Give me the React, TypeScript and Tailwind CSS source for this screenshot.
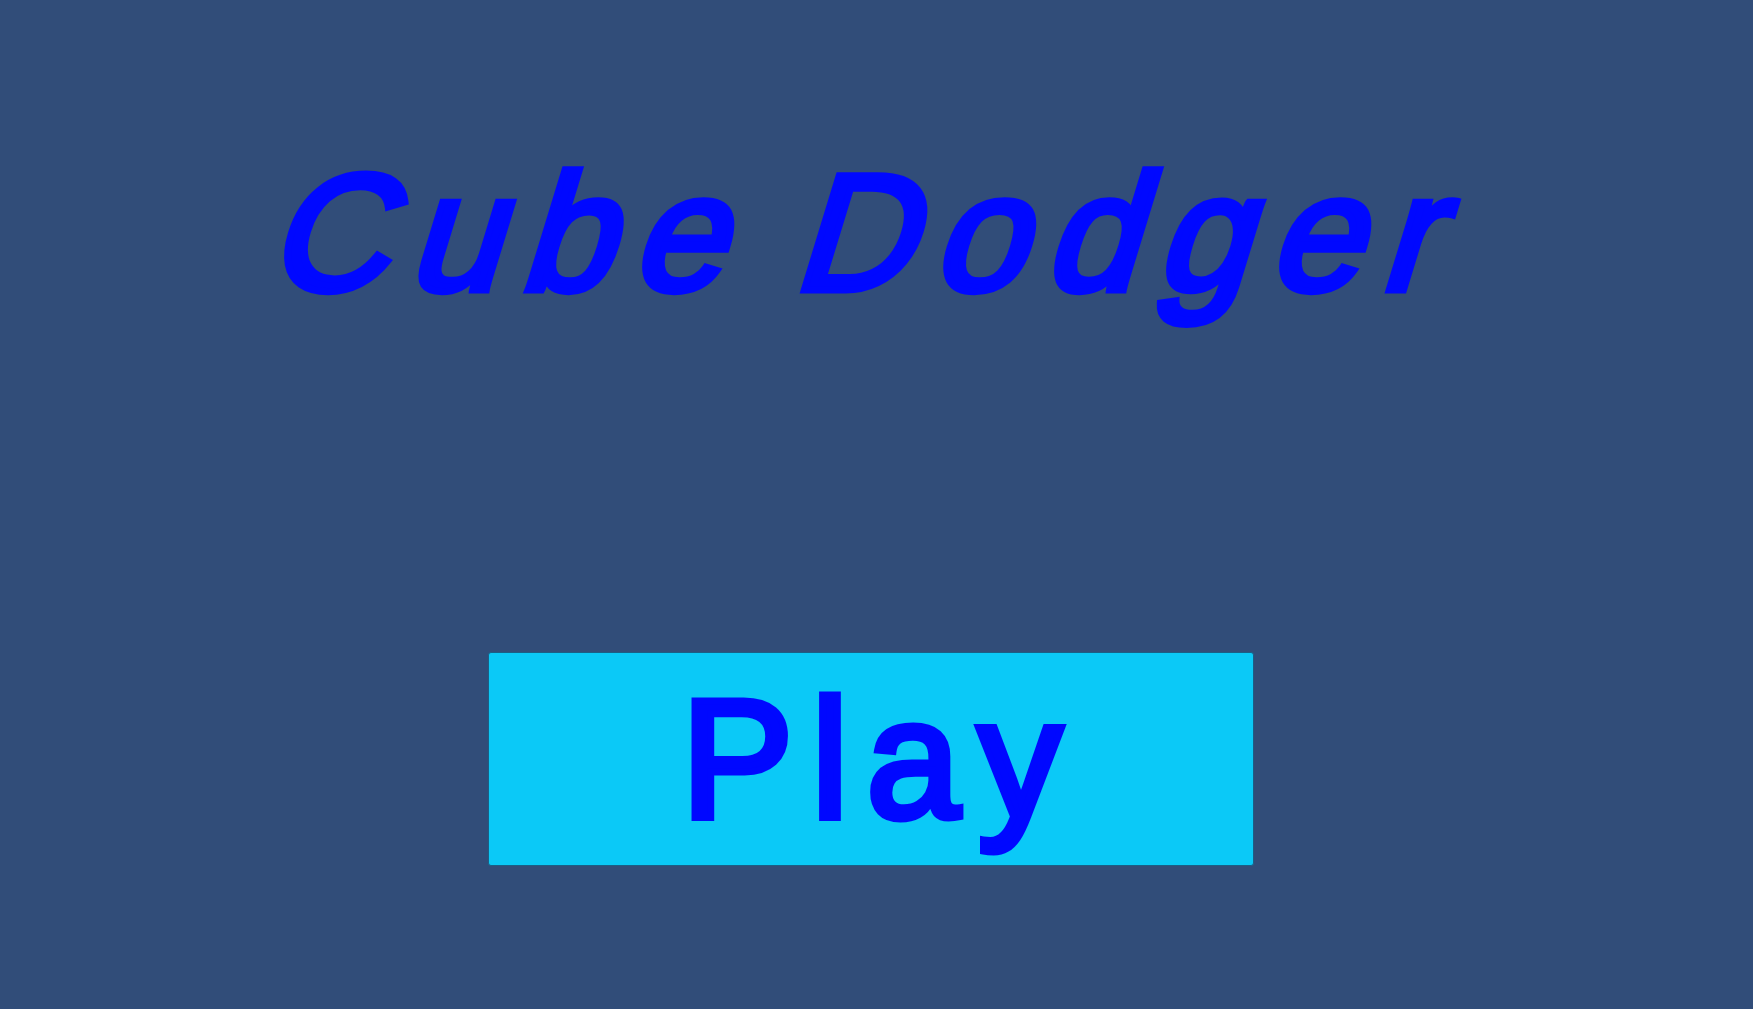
import React from 'react'

const App = () => {
  return (
    <div className='w-full h-[1009px] bg-[#314d79] flex flex-col items-center overflow-hidden'
         style={{ fontFamily: '"Liberation Sans", Arial, sans-serif' }}>
      <h1 className='mt-[150px] mr-0 text-[166px] leading-none font-normal tracking-[0.118em] [word-spacing:-16px] text-[#0008ff] whitespace-nowrap -skew-x-[17deg] [-webkit-text-stroke:7px_#0008ff]'>
        Cube Dodger
      </h1>
      <button type='button'
        className='mt-[336px] mr-[12px] w-[766px] h-[214px] bg-[#0bc9f7] border border-[#1b5f86] rounded-[3px] flex items-center justify-center pl-[20px]'>
        <span className='text-[168px] leading-none font-normal tracking-[0.107em] text-[#0008ff] [-webkit-text-stroke:7px_#0008ff]'>Play</span>
      </button>
    </div>
  )
}

export default App
